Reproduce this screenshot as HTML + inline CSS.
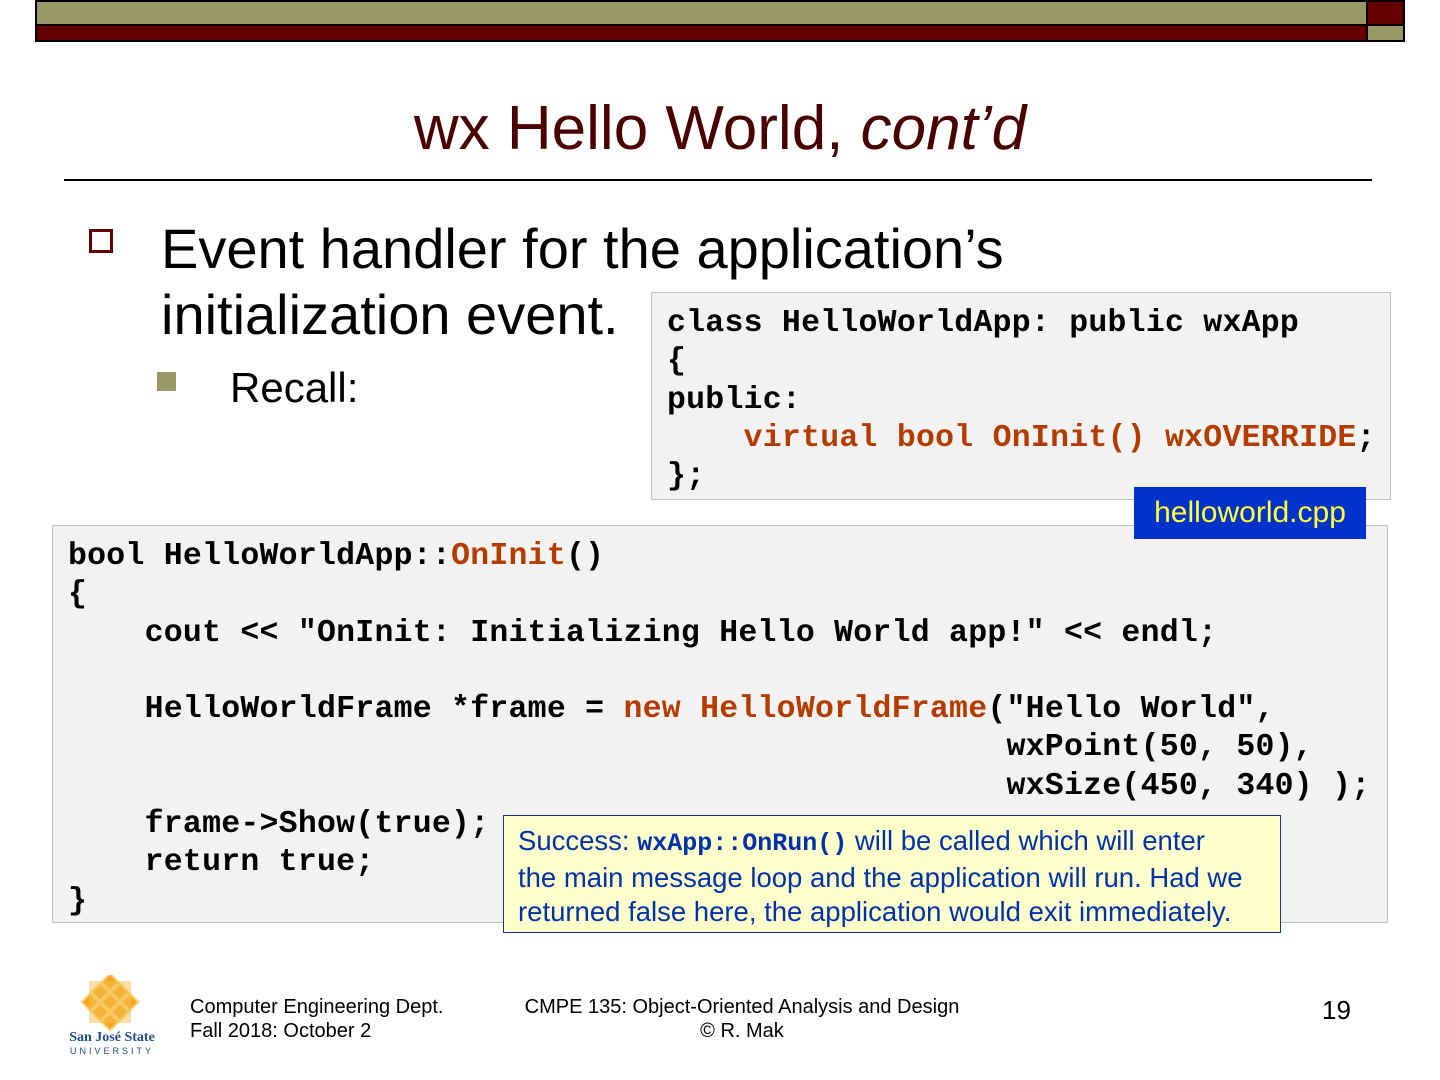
<!DOCTYPE html>
<html><head><meta charset="utf-8"><style>
*{margin:0;padding:0;box-sizing:border-box}
body{width:1440px;height:1080px;background:#fff;position:relative;overflow:hidden;font-family:"Liberation Sans",sans-serif}
.a{position:absolute}
.mono{font-family:"Liberation Mono",monospace;font-weight:bold;white-space:pre}
.o{color:#b43c00}
</style></head><body>
<div class="a" style="left:35px;top:0;width:1333px;height:26px;background:#999966;border:2px solid #000"></div>
<div class="a" style="left:35px;top:24px;width:1333px;height:18px;background:#660000;border:2px solid #000"></div>
<div class="a" style="left:1366px;top:0;width:39px;height:26px;background:#660000;border:2px solid #000"></div>
<div class="a" style="left:1366px;top:24px;width:39px;height:18px;background:#999966;border:2px solid #000"></div>

<div class="a" style="left:0;width:1440px;top:96px;text-align:center;font-size:62px;color:#4a0000;line-height:66px">wx Hello World<span>, </span><i>cont’d</i></div>
<div class="a" style="left:64px;top:179px;width:1308px;height:2px;background:#000"></div>

<div class="a" style="left:89px;top:229px;width:24px;height:24px;border:3px solid #660000"></div>
<div class="a" style="left:161px;top:216px;font-size:56px;line-height:66px;color:#000">Event handler for the application’s<br>initialization event.</div>
<div class="a" style="left:157px;top:372px;width:19px;height:19px;background:#999966"></div>
<div class="a" style="left:230px;top:364px;font-size:42px;line-height:48px;color:#000">Recall:</div>

<div class="a mono" style="left:651px;top:292px;width:740px;height:208px;background:#f2f2f2;border:1px solid #bfbfbf;padding:12px 0 0 15px;font-size:31.5px;line-height:38.3px;letter-spacing:0.25px;color:#000">class HelloWorldApp: public wxApp
{
public:
    <span class="o">virtual bool OnInit() wxOVERRIDE</span>;
};</div>

<div class="a mono" style="left:52px;top:525px;width:1336px;height:398px;background:#f2f2f2;border:1px solid #bfbfbf;padding:12px 0 0 15px;font-size:31.5px;line-height:38.3px;letter-spacing:0.25px;color:#000">bool HelloWorldApp::<span class="o">OnInit</span>()
{
    cout &lt;&lt; "OnInit: Initializing Hello World app!" &lt;&lt; endl;

    HelloWorldFrame *frame = <span class="o">new HelloWorldFrame</span>("Hello World",
                                                 wxPoint(50, 50),
                                                 wxSize(450, 340) );
    frame-&gt;Show(true);
    return true;
}</div>

<div class="a" style="left:1134px;top:487px;width:232px;height:52px;background:#0033cc;color:#ffff33;font-size:30px;line-height:52px;text-align:center">helloworld.cpp</div>

<div class="a" style="left:503px;top:815px;width:778px;height:118px;background:#ffffcc;border:1px solid #1a3399;padding:8px 0 0 14px;font-size:27.5px;line-height:34px;color:#0033aa;white-space:nowrap">Success: <span class="mono" style="font-size:25px">wxApp::OnRun()</span> will be called which will enter<br>the main message loop and the application will run. Had we<br>returned false here, the application would exit immediately.</div>

<svg class="a" style="left:62px;top:975px" width="100" height="82" viewBox="0 0 100 82">
<g transform="translate(48,27) rotate(45)">
<rect x="-21" y="-21" width="42" height="42" fill="#f9d07a"/>
<g fill="#f2a623">
<rect x="-19" y="-19" width="10" height="10"/><rect x="-5" y="-19" width="10" height="10"/><rect x="9" y="-19" width="10" height="10"/>
<rect x="-19" y="-5" width="10" height="10"/><rect x="-5" y="-5" width="10" height="10"/><rect x="9" y="-5" width="10" height="10"/>
<rect x="-19" y="9" width="10" height="10"/><rect x="-5" y="9" width="10" height="10"/><rect x="9" y="9" width="10" height="10"/>
</g></g>
<g transform="translate(48,27)" fill="#f6bd4a" opacity="0.5"><rect x="-21" y="-21" width="42" height="42"/></g>
<text x="50" y="66" text-anchor="middle" font-family="Liberation Serif,serif" font-weight="bold" font-size="14" fill="#1f4e8c">San José State</text>
<text x="50" y="79" text-anchor="middle" font-family="Liberation Sans,sans-serif" font-size="9" letter-spacing="3" fill="#1f4e8c">UNIVERSITY</text>
</svg>
<div class="a" style="left:190px;top:995px;font-size:20px;line-height:24px;color:#000">Computer Engineering Dept.<br>Fall 2018: October 2</div>
<div class="a" style="left:500px;width:484px;top:995px;font-size:20px;line-height:24px;color:#000;text-align:center">CMPE 135: Object-Oriented Analysis and Design<br>© R. Mak</div>
<div class="a" style="left:1322px;top:995px;font-size:26px;line-height:30px;color:#000">19</div>
</body></html>
